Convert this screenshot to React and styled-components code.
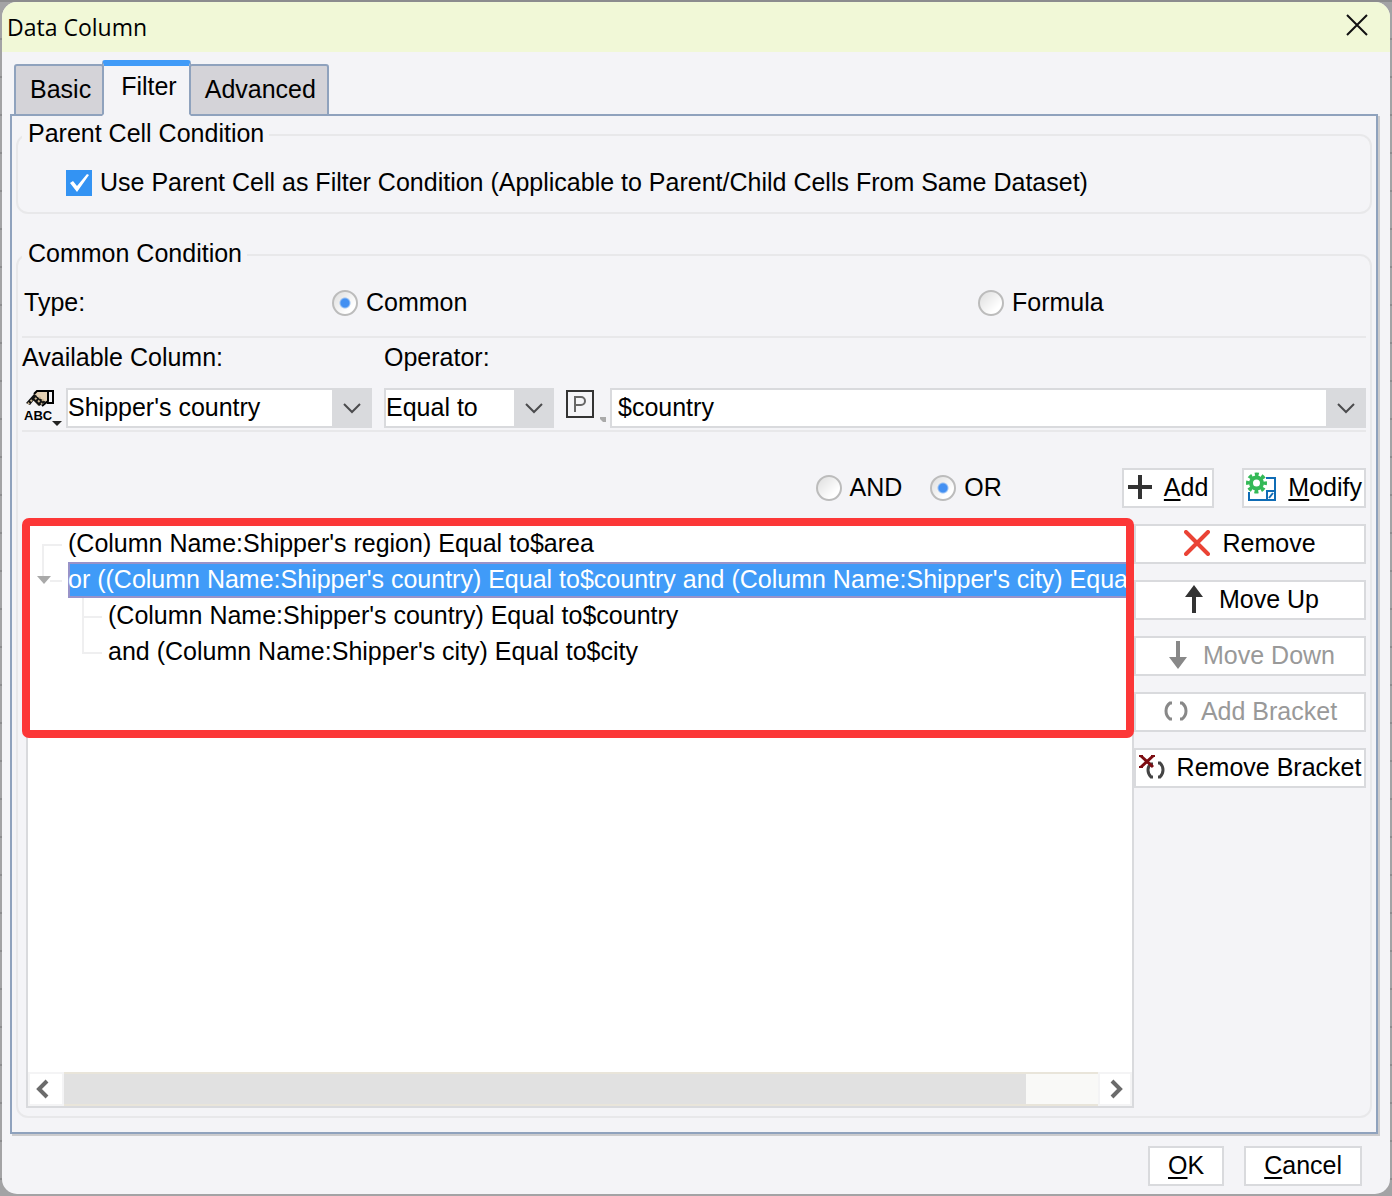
import { useState } from 'react'
import styled, { createGlobalStyle } from 'styled-components'

const GlobalStyle = createGlobalStyle`
  *, *::before, *::after {
    box-sizing: border-box;
  }
  html, body, #root {
    height: 100%;
  }
  body {
    margin: 0;
    color: #000;
    font-family: "Liberation Sans", Arial, sans-serif;
    font-size: 25px;
    line-height: 28px;
  }
  button, input, select {
    font: inherit;
    color: inherit;
  }
`

// window
const Backdrop = styled.div`
  min-height: 100%;
  display: flex;
  padding: 2px;
  background: repeating-linear-gradient(#8c8c8e 0 2px, #a3a3a5 2px 38px);
`
const Dialog = styled.main`
  flex: 1;
  min-width: 0;
  display: flex;
  flex-direction: column;
  background: #f4f4f7;
  border-radius: 15px;
  overflow: hidden;
`
const TitleBar = styled.header`
  height: 50px;
  display: flex;
  align-items: center;
  justify-content: space-between;
  padding: 0 22px 0 5px;
  background: #f1f8d7;
`
const Title = styled.h1`
  margin: 0;
  font-family: "Open Sans", "Noto Sans", sans-serif;
  font-size: 23px;
  font-weight: 400;
`
const CloseButton = styled.button`
  display: flex;
  padding: 0 0 4px;
  border: none;
  background: none;
`

// tabs
const Tabs = styled.div`
  display: flex;
  align-items: flex-end;
  margin: 8px 12px -2px;
`
const Tab = styled.button`
  position: relative;
  z-index: ${props => props.$active ? 1 : 0};
  height: ${props => props.$active ? '56px' : '52px'};
  margin-right: -2px;
  padding: ${props => props.$active ? '0 12px 8px 17px' : '0 11px 2px 14px'};
  border: 2px solid #8fa2bd;
  border-top: ${props => props.$active ? '6px solid #409bf8' : '2px solid #8fa2bd'};
  border-bottom-color: ${props => props.$active ? '#f4f4f7' : '#8fa2bd'};
  border-radius: 3px 3px 0 0;
  background: ${props => props.$active ? '#f4f4f7' : '#d4d3d8'};
`
const Panel = styled.section`
  flex: 1;
  display: flex;
  flex-direction: column;
  gap: 27px;
  margin: 0 12px 0 8px;
  padding: 5px 4px 14px;
  border: 2px solid #8fa2bd;
  box-shadow: 2px 2px 0 #cbcbcd;
`
const Group = styled.fieldset`
  min-width: 0;
  margin: 0;
  padding: 0 4px;
  border: 2px solid #e8e8ea;
  border-radius: 12px;
`
const ConditionGroup = styled(Group)`
  flex: 1;
  display: flex;
  flex-direction: column;
  padding-bottom: 8px;
`
const Legend = styled.legend`
  padding: 0 5px 4px 6px;
  line-height: 24px;
`
const Divider = styled.hr`
  width: 100%;
  height: 2px;
  margin: 0;
  border: none;
  background: #e8e8ea;
`

// choices
const Choice = styled.label`
  display: flex;
  align-items: center;
  gap: 8px;
  line-height: 26px;
`
const ChoiceText = styled.span`
  padding-bottom: 2px;
`
const ParentChoice = styled(Choice)`
  margin: 20px 0 15px 44px;
`
const CheckMark = styled.span`
  position: relative;
  display: flex;
  width: 26px;
  height: 26px;
  svg {
    position: absolute;
    pointer-events: none;
  }
`
const Checkbox = styled.input`
  appearance: none;
  width: 26px;
  height: 26px;
  margin: 0;
  background: #fff;
  border: 2px solid #3393f3;
  &:checked {
    background: #3393f3;
  }
  &:not(:checked) + svg {
    display: none;
  }
`
const Radio = styled.input`
  appearance: none;
  width: 26px;
  height: 26px;
  margin: 0;
  border: 2px solid #bcbcbc;
  border-radius: 50%;
  background: linear-gradient(135deg, #dedede, #fff 75%);
  &:checked {
    background: radial-gradient(circle, #4390f2 0 4px, transparent 6px), linear-gradient(135deg, #dedede, #fff 75%);
  }
`
const TypeRow = styled.div`
  display: grid;
  grid-template-columns: 308px 1fr 388px;
  align-items: center;
  height: 67px;
  padding-left: 2px;
`

// condition editor
const Fields = styled.div`
  display: grid;
  grid-template-columns: 350px 170px 1fr;
  align-items: end;
  gap: 12px;
  padding-bottom: 2px;
`
const Field = styled.div`
  min-width: 0;
`
const FieldLabel = styled.label`
  display: block;
  margin-bottom: 12px;
  line-height: 38px;
`
const FieldRow = styled.div`
  display: flex;
  gap: 4px;
`
const IconButton = styled.button`
  display: flex;
  padding: 0;
  border: none;
  background: none;
`
const Combo = styled.span`
  position: relative;
  flex: 1;
  min-width: 0;
  display: flex;
  svg {
    position: absolute;
    top: 0;
    right: 0;
    pointer-events: none;
    background: #d9dadd;
  }
`
const Select = styled.select`
  appearance: none;
  width: 100%;
  height: 40px;
  padding: 0 40px 2px ${props => props.$inset || '0'};
  border: 2px solid #d9dadd;
  border-radius: 0;
  background: #fff;
`
const Toolbar = styled.div`
  display: flex;
  align-items: center;
  justify-content: flex-end;
  gap: 28px;
  margin: 36px 0 16px;
`
const Joiners = styled.div`
  display: flex;
  gap: 28px;
  margin-right: 92px;
`
const Button = styled.button`
  display: flex;
  align-items: center;
  justify-content: center;
  gap: 12px;
  height: 40px;
  padding: 0 ${props => props.$pad || '2px'} 2px;
  border: 2px solid #d9dadd;
  background: #fff;
  white-space: nowrap;
  svg {
    flex: none;
  }
  &:disabled {
    color: #999;
  }
`
const Mnemonic = styled.span`
  text-decoration: underline;
  text-decoration-thickness: 2px;
  text-underline-offset: 3px;
`

// condition list
const ListArea = styled.div`
  flex: 1;
  display: grid;
  grid-template-columns: minmax(0, 1fr) 232px;
  padding-left: 4px;
`
const ListBox = styled.div`
  position: relative;
  display: flex;
  flex-direction: column;
  justify-content: space-between;
  border: 2px solid #d9dadd;
  background: #fff;
`
const Highlight = styled.div`
  position: absolute;
  z-index: 1;
  top: -8px;
  left: -6px;
  right: -2px;
  height: 220px;
  border: 8px solid #fc3737;
  border-radius: 7px;
  pointer-events: none;
`
const Tree = styled.ul`
  margin: 0;
  padding: 0;
  list-style: none;
`
const TreeRow = styled.li`
  display: flex;
  height: 36px;
  line-height: 35px;
  white-space: nowrap;
  svg {
    flex: none;
  }
`
const TreeText = styled.span`
  ${props => props.$selected && `
    flex: 1;
    background: #409bf8;
    box-shadow: inset 0 0 0 2px #9893c9;
    color: #fff;
  `}
`
const ScrollBar = styled.div`
  display: flex;
  height: 34px;
`
const ScrollButton = styled.button`
  flex: none;
  display: flex;
  padding: 0;
  border: 2px solid #f4f4f5;
  background: #fff;
`
const ScrollTrack = styled.div`
  flex: 1;
  border: solid #e9e5da;
  border-width: 2px 0;
  background: #f9f9f7;
`
const ScrollThumb = styled.div`
  width: 93%;
  height: 100%;
  background: #e1e1e1;
`
const Actions = styled.div`
  display: flex;
  flex-direction: column;
  gap: 16px;
`
const Footer = styled.footer`
  display: flex;
  justify-content: flex-end;
  gap: 20px;
  padding: 12px 28px 8px;
`

// icons
const Chevron = () => (
  <svg width="40" height="40" fill="none" stroke="#4b4b4d" strokeWidth="2">
    <path d="M12 16l8 8 8-8" />
  </svg>
)

const TextTypeIcon = () => (
  <svg width="40" height="40" viewBox="0 0 40 40">
    <path d="M13 3h12v12h-5l-4 3-6-7z" fill="#e2cfb2" />
    <path d="M12 6l3-3h16v12h-6M26 4v9l-6 5" fill="none" stroke="#000" strokeWidth="2" />
    <path d="M4 15l8-9 3 2-7 9zM14 8l10 6-7 4-6-6z" fill="#111" />
    <path d="M13 10l7 6M10 12l-4 4M17 9l6 5" stroke="#c9b490" strokeWidth="2" strokeDasharray="2 2" />
    <text x="2" y="32" fontSize="13" fontWeight="700" fontFamily="Liberation Sans, Arial, sans-serif">ABC</text>
    <path d="M30 33h10l-5 5z" fill="#222" />
  </svg>
)

const ParameterIcon = () => (
  <svg width="40" height="40" viewBox="0 0 40 40">
    <rect x="1" y="3" width="26" height="26" fill="none" stroke="#333" strokeWidth="2" />
    <path d="M9 24V9h6a4 4 0 010 8H9" fill="none" stroke="#666" strokeWidth="2" />
    <path d="M34 29h6v5h-3l-3-3z" fill="#aaa" />
  </svg>
)

const PlusIcon = () => (
  <svg width="24" height="24" stroke="#333" strokeWidth="4">
    <path d="M12 0v24M0 12h24" />
  </svg>
)

const ModifyIcon = () => (
  <svg width="30" height="30" viewBox="0 0 30 30">
    <path d="M20 6h9v14M3 20v8h18" fill="none" stroke="#0f6cb5" strokeWidth="2" />
    <rect x="21" y="19" width="8" height="9" fill="#fff" stroke="#0f6cb5" strokeWidth="2" />
    <path d="M23 26l4-5" stroke="#0f6cb5" strokeWidth="2" />
    <circle cx="10.500" cy="11" r="5.500" fill="#fff" stroke="#34b957" strokeWidth="4" />
    <circle cx="10.500" cy="11" r="8.500" fill="none" stroke="#34b957" strokeWidth="4" strokeDasharray="3.840 2.840" strokeDashoffset="1.920" />
  </svg>
)

const RemoveIcon = () => (
  <svg width="26" height="26" stroke="#ea4335" strokeWidth="4" strokeLinecap="round">
    <path d="M2 2l22 22M24 2L2 24" />
  </svg>
)

const ArrowIcon = ({ down }) => (
  <svg width="26" height="28" viewBox="0 0 26 28" fill={down ? '#888' : '#333'}>
    {down ? <path d="M11 0h4v16h7l-9 12-9-12h7z" /> : <path d="M11 28V12H4L13 0l9 12h-7v16z" />}
  </svg>
)

const BracketIcon = () => (
  <svg width="26" height="20" viewBox="0 0 26 20" fill="none" stroke="#888" strokeWidth="3">
    <path d="M9 2H7Q3 5 3 10t4 8h2M17 2h2q4 3 4 8t-4 8h-2" />
  </svg>
)

const RemoveBracketIcon = () => (
  <svg width="26" height="26" viewBox="0 0 26 26" fill="none">
    <path d="M14 10h-2q-3 2-3 6t3 7h2M19 9h2q3 3 3 7t-3 7h-2" stroke="#444" strokeWidth="3" />
    <path d="M2 2l12 11M14 2L2 13" stroke="#7c0d12" strokeWidth="3" />
    <path d="M0 2h4M12 2h4M0 13h4" stroke="#7c0d12" strokeWidth="2" />
  </svg>
)

const conditions = [
  { id: 1, kind: 'first', text: "(Column Name:Shipper's region) Equal to$area" },
  { id: 2, kind: 'open', text: "or ((Column Name:Shipper's country) Equal to$country and (Column Name:Shipper's city) Equal" },
  { id: 3, kind: 'child', text: "(Column Name:Shipper's country) Equal to$country" },
  { id: 4, kind: 'last', text: "and (Column Name:Shipper's city) Equal to$city" },
]

const branches = {
  first: 'M34 19H15v17',
  open: 'M15 0v16M22 19h12',
  child: 'M55 0v36M55 19h19',
  last: 'M55 0v19h19',
}

const Branch = ({ kind }) => (
  <svg width={kind === 'child' || kind === 'last' ? 80 : 40} height="36" fill="none">
    <path d={branches[kind]} stroke="#efeff0" strokeWidth="2" />
    {kind === 'open' && <path d="M9 14h14l-7 8z" fill="#a9a9a9" />}
  </svg>
)

const App = () => {
  const [useParent, setUseParent] = useState(true)
  const [type, setType] = useState('common')
  const [joiner, setJoiner] = useState('or')
  const [selected, setSelected] = useState(2)

  return (
    <Backdrop>
      <GlobalStyle />
      <Dialog>
        <TitleBar>
          <Title>Data Column</Title>
          <CloseButton aria-label="Close">
            <svg width="22" height="22" stroke="#111" strokeWidth="2">
              <path d="M1 1l20 20M21 1L1 21" />
            </svg>
          </CloseButton>
        </TitleBar>

        <Tabs role="tablist">
          <Tab role="tab">Basic</Tab>
          <Tab role="tab" aria-selected="true" $active>Filter</Tab>
          <Tab role="tab">Advanced</Tab>
        </Tabs>

        <Panel role="tabpanel">
          <Group>
            <Legend>Parent Cell Condition</Legend>
            <ParentChoice>
              <CheckMark>
                <Checkbox type="checkbox" checked={useParent} onChange={e => setUseParent(e.target.checked)} />
                <svg width="26" height="26" fill="#fff">
                  <path d="M4 13l3-2 4 5L21 4l2 1-12 17z" />
                </svg>
              </CheckMark>
              <ChoiceText>Use Parent Cell as Filter Condition (Applicable to Parent/Child Cells From Same Dataset)</ChoiceText>
            </ParentChoice>
          </Group>

          <ConditionGroup>
            <Legend>Common Condition</Legend>
            <TypeRow>
              <ChoiceText>Type:</ChoiceText>
              <Choice>
                <Radio type="radio" name="type" checked={type === 'common'} onChange={() => setType('common')} />
                <ChoiceText>Common</ChoiceText>
              </Choice>
              <Choice>
                <Radio type="radio" name="type" checked={type === 'formula'} onChange={() => setType('formula')} />
                <ChoiceText>Formula</ChoiceText>
              </Choice>
            </TypeRow>
            <Divider />
            <Fields>
              <Field>
                <FieldLabel htmlFor="column">Available Column:</FieldLabel>
                <FieldRow>
                  <IconButton aria-label="Column type"><TextTypeIcon /></IconButton>
                  <Combo>
                    <Select id="column"><option>Shipper's country</option></Select>
                    <Chevron />
                  </Combo>
                </FieldRow>
              </Field>
              <Field>
                <FieldLabel htmlFor="operator">Operator:</FieldLabel>
                <Combo>
                  <Select id="operator"><option>Equal to</option></Select>
                  <Chevron />
                </Combo>
              </Field>
              <FieldRow>
                <IconButton aria-label="Parameter"><ParameterIcon /></IconButton>
                <Combo>
                  <Select aria-label="Value" $inset="6px"><option>$country</option></Select>
                  <Chevron />
                </Combo>
              </FieldRow>
            </Fields>
            <Divider />

            <Toolbar>
              <Joiners>
                <Choice>
                  <Radio type="radio" name="joiner" checked={joiner === 'and'} onChange={() => setJoiner('and')} />
                  <ChoiceText>AND</ChoiceText>
                </Choice>
                <Choice>
                  <Radio type="radio" name="joiner" checked={joiner === 'or'} onChange={() => setJoiner('or')} />
                  <ChoiceText>OR</ChoiceText>
                </Choice>
              </Joiners>
              <Button $pad="4px"><PlusIcon /><span><Mnemonic>A</Mnemonic>dd</span></Button>
              <Button><ModifyIcon /><span><Mnemonic>M</Mnemonic>odify</span></Button>
            </Toolbar>

            <ListArea>
              <ListBox>
                <Highlight />
                <Tree>
                  {conditions.map(({ id, kind, text }) => (
                    <TreeRow key={id} onClick={() => setSelected(id)}>
                      <Branch kind={kind} />
                      <TreeText $selected={selected === id}>{text}</TreeText>
                    </TreeRow>
                  ))}
                </Tree>
                <ScrollBar>
                  <ScrollButton aria-label="Scroll left">
                    <svg width="32" height="30" fill="none" stroke="#6b6b6b" strokeWidth="4">
                      <path d="M17 7l-8 8 8 8" />
                    </svg>
                  </ScrollButton>
                  <ScrollTrack><ScrollThumb /></ScrollTrack>
                  <ScrollButton aria-label="Scroll right">
                    <svg width="30" height="30" fill="none" stroke="#6b6b6b" strokeWidth="4">
                      <path d="M12 7l8 8-8 8" />
                    </svg>
                  </ScrollButton>
                </ScrollBar>
              </ListBox>
              <Actions>
                <Button><RemoveIcon />Remove</Button>
                <Button><ArrowIcon />Move Up</Button>
                <Button disabled><ArrowIcon down />Move Down</Button>
                <Button disabled><BracketIcon />Add Bracket</Button>
                <Button><RemoveBracketIcon />Remove Bracket</Button>
              </Actions>
            </ListArea>
          </ConditionGroup>
        </Panel>

        <Footer>
          <Button $pad="18px"><span><Mnemonic>O</Mnemonic>K</span></Button>
          <Button $pad="18px"><span><Mnemonic>C</Mnemonic>ancel</span></Button>
        </Footer>
      </Dialog>
    </Backdrop>
  )
}

export default App
